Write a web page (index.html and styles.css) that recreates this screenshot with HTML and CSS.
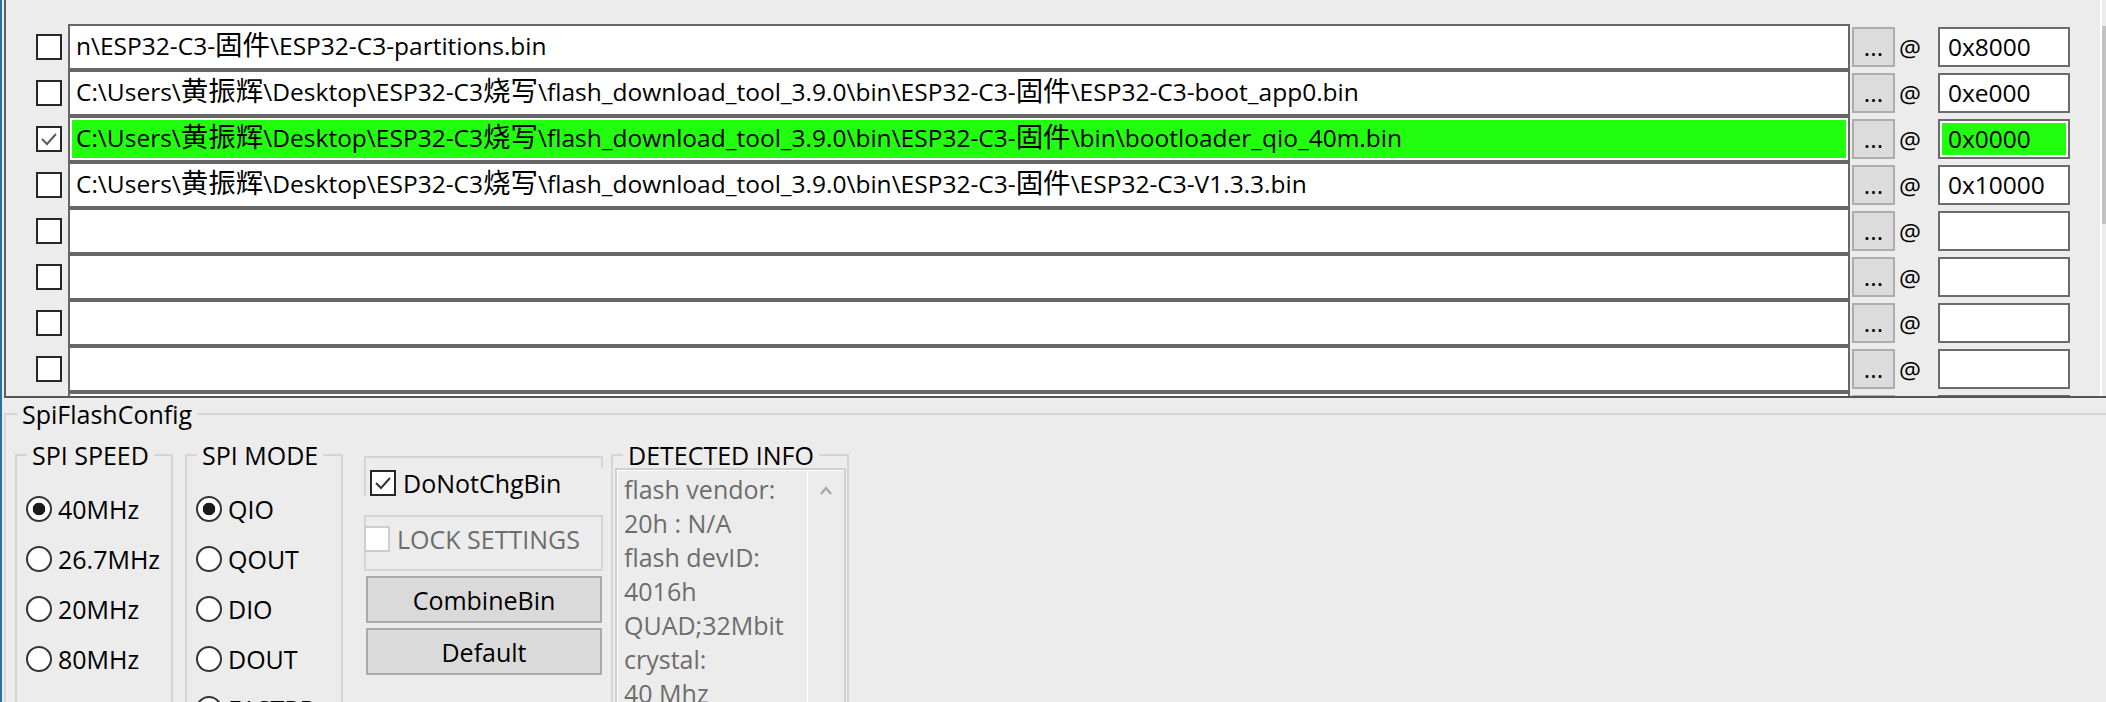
FILE: index.html
```html
<!DOCTYPE html>
<html lang="zh-CN">
<head>
    <meta charset="UTF-8">
    <meta name="viewport" content="width=device-width, initial-scale=1.0">
    <title>Flash Download Tool</title>
    <link rel="stylesheet" href="styles.css">
</head>
<body>
    <div class="desk-edge"></div>

    <div class="window">
        <!-- Dateiliste mit Adressen -->
        <div class="file-list">
            <div class="rows">
                <div class="row">
                    <span class="check"></span>
                    <div class="path">n\ESP32-C3-<span class="cjk">固件</span>\ESP32-C3-partitions.bin</div>
                    <button class="browse">...</button>
                    <span class="at">@</span>
                    <div class="addr">0x8000</div>
                </div>
                <div class="row">
                    <span class="check"></span>
                    <div class="path">C:\Users\<span class="cjk">黄振辉</span>\Desktop\ESP32-C3<span class="cjk">烧写</span>\flash_download_tool_3.9.0\bin\ESP32-C3-<span class="cjk">固件</span>\ESP32-C3-boot_app0.bin</div>
                    <button class="browse">...</button>
                    <span class="at">@</span>
                    <div class="addr">0xe000</div>
                </div>
                <div class="row">
                    <span class="check checked">
                        <svg viewBox="0 0 22 22" width="22" height="22"><polyline points="4,11 9,16 18,6" fill="none" stroke="#5a5a5a" stroke-width="2"/></svg>
                    </span>
                    <div class="path active">C:\Users\<span class="cjk">黄振辉</span>\Desktop\ESP32-C3<span class="cjk">烧写</span>\flash_download_tool_3.9.0\bin\ESP32-C3-<span class="cjk">固件</span>\bin\bootloader_qio_40m.bin</div>
                    <button class="browse">...</button>
                    <span class="at">@</span>
                    <div class="addr active">0x0000</div>
                </div>
                <div class="row">
                    <span class="check"></span>
                    <div class="path">C:\Users\<span class="cjk">黄振辉</span>\Desktop\ESP32-C3<span class="cjk">烧写</span>\flash_download_tool_3.9.0\bin\ESP32-C3-<span class="cjk">固件</span>\ESP32-C3-V1.3.3.bin</div>
                    <button class="browse">...</button>
                    <span class="at">@</span>
                    <div class="addr">0x10000</div>
                </div>
                <div class="row">
                    <span class="check"></span>
                    <div class="path"></div>
                    <button class="browse">...</button>
                    <span class="at">@</span>
                    <div class="addr"></div>
                </div>
                <div class="row">
                    <span class="check"></span>
                    <div class="path"></div>
                    <button class="browse">...</button>
                    <span class="at">@</span>
                    <div class="addr"></div>
                </div>
                <div class="row">
                    <span class="check"></span>
                    <div class="path"></div>
                    <button class="browse">...</button>
                    <span class="at">@</span>
                    <div class="addr"></div>
                </div>
                <div class="row">
                    <span class="check"></span>
                    <div class="path"></div>
                    <button class="browse">...</button>
                    <span class="at">@</span>
                    <div class="addr"></div>
                </div>
                <div class="row">
                    <span class="check"></span>
                    <div class="path"></div>
                    <button class="browse">...</button>
                    <span class="at">@</span>
                    <div class="addr"></div>
                </div>
            </div>
            <div class="scrollbar"><div class="thumb"></div></div>
        </div>

        <!-- SPI Einstellungen -->
        <fieldset class="spi-config">
            <legend>SpiFlashConfig</legend>
            <div class="config-body">
                <fieldset class="group">
                    <legend>SPI SPEED</legend>
                    <label class="radio-item"><span class="radio on"></span>40MHz</label>
                    <label class="radio-item"><span class="radio"></span>26.7MHz</label>
                    <label class="radio-item"><span class="radio"></span>20MHz</label>
                    <label class="radio-item"><span class="radio"></span>80MHz</label>
                </fieldset>

                <fieldset class="group mode">
                    <legend>SPI MODE</legend>
                    <label class="radio-item"><span class="radio on"></span>QIO</label>
                    <label class="radio-item"><span class="radio"></span>QOUT</label>
                    <label class="radio-item"><span class="radio"></span>DIO</label>
                    <label class="radio-item"><span class="radio"></span>DOUT</label>
                    <label class="radio-item"><span class="radio"></span>FASTRD</label>
                </fieldset>

                <div class="options">
                    <div class="opt-box">
                        <span class="check checked">
                            <svg viewBox="0 0 22 22" width="22" height="22"><polyline points="4,11 9,16 18,6" fill="none" stroke="#333" stroke-width="2"/></svg>
                        </span>
                        <span class="opt-label">DoNotChgBin</span>
                    </div>
                    <div class="lock-box">
                        <span class="check disabled"></span>
                        <span class="opt-label">LOCK SETTINGS</span>
                    </div>
                    <button class="cmd">CombineBin</button>
                    <button class="cmd">Default</button>
                </div>

                <fieldset class="group info">
                    <legend>DETECTED INFO</legend>
                    <div class="info-box">
                        <div class="info-text">
                            flash vendor:<br>
                            20h : N/A<br>
                            flash devID:<br>
                            4016h<br>
                            QUAD;32Mbit<br>
                            crystal:<br>
                            40 Mhz
                        </div>
                        <div class="info-scroll">
                            <svg viewBox="0 0 14 12" width="14" height="12"><polyline points="2,10 7,4 12,10" fill="none" stroke="#a8a8a8" stroke-width="2.4"/></svg>
                        </div>
                    </div>
                </fieldset>
            </div>
        </fieldset>
    </div>
</body>
</html>
```

FILE: styles.css
```css
body {
    margin: 0;
    height: 702px;
    overflow: hidden;
    display: flex;
    background: #ececec;
    color: #000;
    font-family: "Open Sans", "Noto Sans CJK SC", sans-serif;
}

.desk-edge {
    flex: none;
    width: 2px;
    background: #2f6e9c;
}

.window {
    flex: 1;
    min-width: 0;
    margin-left: 2px;
}

/* Dateiliste */
.file-list {
    display: flex;
    height: 396px;
    overflow: hidden;
    border-left: 2px solid #5e5e5e;
    border-bottom: 2px solid #555;
}

.rows {
    flex: 1;
    padding-top: 24px;
}

.row {
    display: flex;
    align-items: center;
    height: 46px;
    font-size: 24.5px;
}

.check {
    flex: none;
    box-sizing: border-box;
    width: 26px;
    height: 26px;
    border: 2px solid #262626;
    background: #fff;
    display: flex;
    align-items: center;
    justify-content: center;
}

.row .check {
    margin-left: 30px;
}

.check.disabled {
    border-color: #cdcdcd;
}

.path {
    flex: none;
    box-sizing: border-box;
    width: 1782px;
    height: 46px;
    margin-left: 6px;
    padding-left: 6px;
    border: 2px solid #666;
    background: #fff;
    line-height: 40px;
    white-space: nowrap;
    overflow: hidden;
}

.cjk {
    font-size: 27.5px;
    line-height: 1;
}

.path.active,
.addr.active {
    background: #21ff0f;
    box-shadow: inset 0 0 0 2px #fff;
}

.browse {
    flex: none;
    box-sizing: border-box;
    width: 43px;
    height: 40px;
    margin-left: 2px;
    padding: 0;
    border: 2px solid #adadad;
    background: #dcdcdc;
    font: inherit;
    line-height: 36px;
    color: #000;
}

.at {
    flex: none;
    width: 22px;
    margin-left: 4px;
}

.addr {
    flex: none;
    box-sizing: border-box;
    width: 132px;
    height: 40px;
    margin-left: 17px;
    padding-left: 8px;
    border: 2px solid #6b6b6b;
    background: #fff;
    line-height: 36px;
}

.scrollbar {
    flex: none;
    width: 4px;
    padding-top: 26px;
    border-left: 2px solid #fff;
}

.thumb {
    height: 198px;
    background: #c2c2c2;
}

/* SpiFlashConfig */
.spi-config {
    margin: 3px -80px 0 0;
    padding: 15px 0 0 9px;
    min-width: 0;
    height: 420px;
    border: 2px solid #d5d5d5;
}

legend {
    margin-left: 2px;
    padding: 0 5px;
    font-size: 25px;
    line-height: 26px;
}

.config-body {
    display: flex;
    align-items: flex-start;
}

.group {
    box-sizing: border-box;
    width: 158px;
    height: 320px;
    min-width: 0;
    margin: 0;
    padding: 16px 0 0;
    border: 2px solid #d5d5d5;
}

.group legend {
    margin-left: 10px;
}

.group.mode {
    margin-left: 12px;
}

.radio-item {
    display: flex;
    align-items: center;
    gap: 6px;
    height: 50px;
    margin-left: 9px;
    font-size: 25px;
}

.radio {
    flex: none;
    box-sizing: border-box;
    width: 26px;
    height: 26px;
    border: 2px solid #333;
    border-radius: 50%;
    background: #fff;
}

.radio.on {
    background: radial-gradient(circle, #1b1b1b 0 6px, #fff 6.6px);
}

.options {
    width: 239px;
    margin-left: 21px;
    padding-top: 14px;
    font-size: 25px;
}

.opt-box {
    position: relative;
    display: flex;
    align-items: flex-start;
    box-sizing: border-box;
    height: 40px;
    padding: 12px 0 0 4px;
    border-top: 2px solid #d5d5d5;
    border-left: 2px solid #d5d5d5;
}

/* kurzes Stueck vom rechten Rahmen */
.opt-box::after {
    content: "";
    position: absolute;
    top: -2px;
    right: 0;
    width: 2px;
    height: 12px;
    background: #d5d5d5;
}

.opt-label {
    margin-left: 7px;
    line-height: 26px;
}

.lock-box {
    display: flex;
    align-items: flex-start;
    box-sizing: border-box;
    height: 56px;
    margin-top: 19px;
    padding-top: 9px;
    border: 2px solid #d5d5d5;
    color: #6d6d6d;
}

.lock-box .check {
    margin-left: -2px;
}

.cmd {
    display: block;
    box-sizing: border-box;
    width: 236px;
    height: 47px;
    margin: 5px 0 0 2px;
    padding: 0;
    border: 2px solid #a9a9a9;
    background: #dadada;
    font: inherit;
    color: #000;
}

.group.info {
    width: 238px;
    margin-left: 8px;
    padding: 0;
}

.info-box {
    display: flex;
    box-sizing: border-box;
    width: 231px;
    height: 280px;
    margin-left: 2px;
    border: 2px solid #d0d0d0;
    box-shadow: inset 1px 1px 0 #fff;
}

.info-text {
    flex: 1;
    padding: 2px 0 0 7px;
    font-size: 25px;
    line-height: 34px;
    color: #6d6d6d;
    white-space: nowrap;
}

.info-scroll {
    flex: none;
    display: flex;
    justify-content: center;
    align-items: flex-start;
    width: 36px;
    padding-top: 14px;
    border-left: 1px solid #fff;
}
```
